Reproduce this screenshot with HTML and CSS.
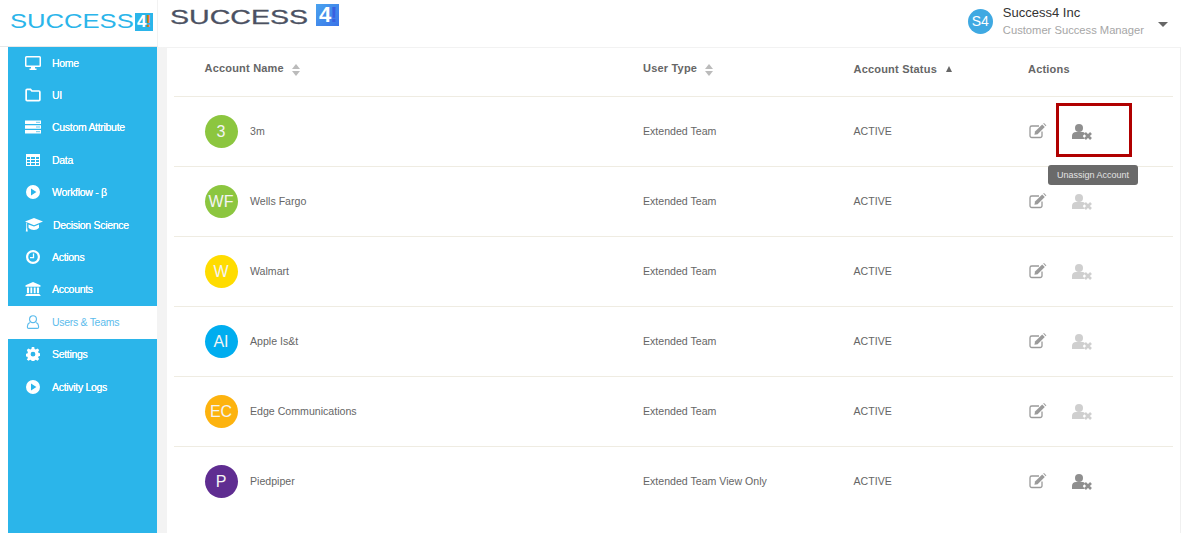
FILE: index.html
```html
<!DOCTYPE html>
<html>
    <head>
        <meta charset="UTF-8">
        <meta name="viewport" content="width=device-width, initial-scale=1">
        <title>Users &amp; Teams</title>
        <link rel="stylesheet" href="styles.css">
    </head>
    <body>
        <svg class="defs" width="0" height="0">
            <symbol id="i-edit" viewBox="0 0 18 16">
                <path d="M13 8.500v4.200a1.800 1.800 0 0 1-1.800 1.800H2.800A1.800 1.800 0 0 1 1 12.700V4.800A1.800 1.800 0 0 1 2.800 3H10" fill="none" stroke="currentColor" stroke-width="1.300"/>
                <path d="M6 8.600 13.200 1.400l2.600 2.600-7.200 7.200-3.200.6z" fill="currentColor"/>
                <path d="M14.200.6 15 0l2.400 2.400-.7.8z" fill="currentColor"/>
            </symbol>
            <symbol id="i-unassign" viewBox="0 0 20 16">
                <circle cx="7" cy="4" r="4" fill="currentColor"/>
                <path d="M0 15v-3.200C0 9.400 1.800 8 4 8h6c1.400 0 2.400.5 3 1.400L10.800 12l2 3z" fill="currentColor"/>
                <path d="M13 9l6 6M19 9l-6 6" stroke="currentColor" stroke-width="2.600" fill="none"/>
            </symbol>
            <symbol id="i-play" viewBox="0 0 14 14">
                <path fill-rule="evenodd" d="M7 0a7 7 0 1 1 0 14A7 7 0 0 1 7 0zM5 3.600v6.800L10.400 7z" fill="currentColor"/>
            </symbol>
        </svg>

        <header class="topbar">
            <div class="brand-cell">
                <div class="logo logo-small">
                    <span class="logo-word">SUCCESS</span>
                    <span class="logo-mark">4<b>!</b></span>
                </div>
            </div>
            <div class="logo logo-large">
                <span class="logo-word">SUCCESS</span>
                <span class="logo-mark">4<b>!</b></span>
            </div>
            <div class="profile">
                <span class="profile-badge">S4</span>
                <div class="profile-text">
                    <div class="profile-name">Success4 Inc</div>
                    <div class="profile-role">Customer Success Manager</div>
                </div>
                <span class="profile-caret"></span>
            </div>
        </header>

        <div class="layout">
            <nav class="sidebar">
                <a class="nav-item">
                    <svg class="nav-icon" viewBox="0 0 16 14"><path fill-rule="evenodd" d="M1.500 0h13A1.500 1.500 0 0 1 16 1.500v8a1.500 1.500 0 0 1-1.500 1.500H10v1.500h1.500V14h-7v-1.500H6V11H1.500A1.500 1.500 0 0 1 0 9.500v-8A1.500 1.500 0 0 1 1.500 0zM1.500 1.500v8h13v-8z" fill="currentColor"/></svg>
                    Home
                </a>
                <a class="nav-item">
                    <svg class="nav-icon" viewBox="0 0 14 12"><path d="M1.800 1h3l1.200 1.500h6.200a.8.800 0 0 1 .8.800v6.900a.8.800 0 0 1-.8.800H1.800a.8.800 0 0 1-.8-.8V1.800A.8.800 0 0 1 1.800 1z" fill="none" stroke="currentColor" stroke-width="1.500"/></svg>
                    UI
                </a>
                <a class="nav-item">
                    <svg class="nav-icon" viewBox="0 0 16 13"><path d="M0 0h16v3.600H0zM0 4.700h16v3.600H0zM0 9.400h16V13H0z" fill="currentColor"/><path d="M11 1.800h4M11 6.500h4M11 11.200h4" stroke="#2bb5ea" stroke-width=".7"/></svg>
                    Custom Attribute
                </a>
                <a class="nav-item">
                    <svg class="nav-icon nav-icon-sm" viewBox="0 0 14 12"><path fill-rule="evenodd" d="M0 0h14v12H0zM1 3v2h3V3zM5 3v2h4V3zM10 3v2h3V3zM1 6v2h3V6zM5 6v2h4V6zM10 6v2h3V6zM1 9v2h3V9zM5 9v2h4V9zM10 9v2h3V9z" fill="currentColor"/></svg>
                    Data
                </a>
                <a class="nav-item">
                    <svg class="nav-icon nav-icon-sm"><use href="#i-play"/></svg>
                    Workflow - β
                </a>
                <a class="nav-item">
                    <svg class="nav-icon nav-icon-wide" viewBox="0 0 18 14"><path d="M9 0l9 3.600-9 3.600L0 3.600z" fill="currentColor"/><path d="M3.500 6.500v3.300C5 11.300 7 12 9 12s3.500-.7 5-2.200V6.500L9 8.500zM1.300 4.500v5L.8 13.500h2l-.7-4v-4.700z" fill="currentColor"/></svg>
                    Decision Science
                </a>
                <a class="nav-item">
                    <svg class="nav-icon nav-icon-sm" viewBox="0 0 14 14"><circle cx="7" cy="7" r="5.900" fill="none" stroke="currentColor" stroke-width="2.200"/><path d="M7.500 3.500V7.700H4" fill="none" stroke="currentColor" stroke-width="1.300"/></svg>
                    Actions
                </a>
                <a class="nav-item">
                    <svg class="nav-icon" viewBox="0 0 16 15"><path d="M8 0l8 3.500V5H0V3.500zM1.500 6h2.300v6H1.500zM5.200 6h2v6h-2zM8.800 6h2v6h-2zM12.200 6h2.300v6h-2.300zM.8 12.800h14.400V14H.8zM0 14h16v1H0z" fill="currentColor"/></svg>
                    Accounts
                </a>
                <a class="nav-item nav-item-active">
                    <svg class="nav-icon" viewBox="0 0 14 15"><circle cx="7" cy="4.500" r="3.700" fill="none" stroke="currentColor" stroke-width="1.200"/><path d="M3.500 8C1.800 9 1 10.500 1 12.200V13a1.300 1.300 0 0 0 1.300 1.300h9.400A1.300 1.300 0 0 0 13 13v-.8C13 10.500 12.200 9 10.500 8" fill="none" stroke="currentColor" stroke-width="1.200"/></svg>
                    Users &amp; Teams
                </a>
                <a class="nav-item">
                    <svg class="nav-icon nav-icon-sm" viewBox="0 0 14 14"><path fill-rule="evenodd" d="M5.800 0h2.400l.4 2 1.200.5 1.700-1.100 1.700 1.700-1.100 1.700.5 1.200 2 .4v2.400l-2 .4-.5 1.200 1.100 1.700-1.700 1.700-1.700-1.100-1.200.5-.4 2H5.800l-.4-2-1.200-.5-1.700 1.100L.8 12.600l1.100-1.700-.5-1.200-2-.4V6.900l2-.4.5-1.200L.8 3.100l1.700-1.700 1.700 1.100 1.200-.5zM7 4.800a2.400 2.400 0 1 0 0 4.800 2.400 2.400 0 0 0 0-4.800z" fill="currentColor"/></svg>
                    Settings
                </a>
                <a class="nav-item">
                    <svg class="nav-icon nav-icon-sm"><use href="#i-play"/></svg>
                    Activity Logs
                </a>
            </nav>

            <main class="content">
                <div class="accounts">
                    <div class="row row-head">
                        <div>Account Name <span class="sort"></span></div>
                        <div>User Type <span class="sort"></span></div>
                        <div>Account Status <span class="sort-up"></span></div>
                        <div class="head-actions">Actions</div>
                    </div>

                    <div class="row">
                        <div class="account"><span class="avatar green">3</span>3m</div>
                        <div>Extended Team</div>
                        <div>ACTIVE</div>
                        <div class="actions">
                            <svg class="icon-edit"><use href="#i-edit"/></svg>
                            <span class="unassign-wrap">
                                <svg class="icon-unassign"><use href="#i-unassign"/></svg>
                                <span class="highlight"></span>
                                <span class="tooltip">Unassign Account</span>
                            </span>
                        </div>
                    </div>
                    <div class="row">
                        <div class="account"><span class="avatar green">WF</span>Wells Fargo</div>
                        <div>Extended Team</div>
                        <div>ACTIVE</div>
                        <div class="actions">
                            <svg class="icon-edit"><use href="#i-edit"/></svg>
                            <svg class="icon-unassign off"><use href="#i-unassign"/></svg>
                        </div>
                    </div>
                    <div class="row">
                        <div class="account"><span class="avatar yellow">W</span>Walmart</div>
                        <div>Extended Team</div>
                        <div>ACTIVE</div>
                        <div class="actions">
                            <svg class="icon-edit"><use href="#i-edit"/></svg>
                            <svg class="icon-unassign off"><use href="#i-unassign"/></svg>
                        </div>
                    </div>
                    <div class="row">
                        <div class="account"><span class="avatar blue">AI</span>Apple Is&amp;t</div>
                        <div>Extended Team</div>
                        <div>ACTIVE</div>
                        <div class="actions">
                            <svg class="icon-edit"><use href="#i-edit"/></svg>
                            <svg class="icon-unassign off"><use href="#i-unassign"/></svg>
                        </div>
                    </div>
                    <div class="row">
                        <div class="account"><span class="avatar amber">EC</span>Edge Communications</div>
                        <div>Extended Team</div>
                        <div>ACTIVE</div>
                        <div class="actions">
                            <svg class="icon-edit"><use href="#i-edit"/></svg>
                            <svg class="icon-unassign off"><use href="#i-unassign"/></svg>
                        </div>
                    </div>
                    <div class="row row-last">
                        <div class="account"><span class="avatar purple">P</span>Piedpiper</div>
                        <div>Extended Team View Only</div>
                        <div>ACTIVE</div>
                        <div class="actions">
                            <svg class="icon-edit"><use href="#i-edit"/></svg>
                            <svg class="icon-unassign"><use href="#i-unassign"/></svg>
                        </div>
                    </div>
                </div>
            </main>
        </div>
    </body>
</html>
```

FILE: styles.css
```css
* {
    box-sizing: border-box;
}

html, body {
    height: 533px;
    overflow: hidden;
}

body {
    margin: 0;
    background: #fff;
    font-family: "Liberation Sans", Arial, sans-serif;
    color: #666;
}

.defs {
    position: absolute;
}

/* Top bar */
.topbar {
    display: flex;
    height: 47px;
    align-items: flex-start;
}

.brand-cell {
    width: 158px;
    height: 47px;
    flex: none;
    padding: 11px 0 0 10px;
    border-right: 1px solid #f2f2f2;
    border-bottom: 1px solid #e8e8e8;
}

.logo {
    display: flex;
    align-items: flex-start;
}

.logo-word {
    display: block;
    font-weight: 400;
    transform-origin: left top;
    white-space: nowrap;
}

.logo-small .logo-word {
    color: #2bb5ea;
    font-size: 20px;
    line-height: 20px;
    width: 125px;
    transform: scaleX(1.28);
}

.logo-large {
    margin: 5px 0 0 12px;
}

.logo-large .logo-word {
    color: #4b5162;
    font-size: 21px;
    line-height: 24px;
    width: 146px;
    transform: scaleX(1.36);
    -webkit-text-stroke: .3px #4b5162;
}

.logo-mark {
    display: block;
    position: relative;
    text-align: left;
    color: #fff;
    font-weight: 700;
}

.logo-mark b {
    color: #ee7a1a;
    font-weight: 700;
}

.logo-small .logo-mark {
    width: 18px;
    height: 18px;
    margin-top: 2px;
    background: #2bb5ea;
    font-size: 17px;
    line-height: 18px;
    padding-left: 2px;
    letter-spacing: -1px;
}

.logo-large .logo-mark {
    width: 23px;
    height: 22px;
    margin-top: -1px;
    background: linear-gradient(135deg, #4aa3ef, #3a74e8);
    font-size: 22px;
    line-height: 22px;
    padding-left: 3px;
    letter-spacing: -1px;
}

.logo-large .logo-mark b {
    color: #3a5fe0;
}

.profile {
    margin-left: auto;
    display: flex;
    align-items: center;
    height: 42px;
    padding-right: 16px;
}

.profile-badge {
    width: 25px;
    height: 25px;
    border-radius: 50%;
    background: #3fa9e2;
    color: #fff;
    font-size: 14px;
    line-height: 25px;
    text-align: center;
    margin-right: 10px;
}

.profile-text {
    margin-top: 1px;
}

.profile-name {
    font-size: 13px;
    line-height: 16px;
    color: #333;
}

.profile-role {
    font-size: 11.200px;
    line-height: 18px;
    color: #a6a6a6;
}

.profile-caret {
    width: 0;
    height: 0;
    margin-left: 14px;
    margin-top: 7px;
    border-left: 5px solid transparent;
    border-right: 5px solid transparent;
    border-top: 5px solid #666;
}

/* Body of the page */
.layout {
    display: flex;
    height: 486px;
    padding-left: 8px;
}

.sidebar {
    width: 149px;
    flex: none;
    background: #2bb5ea;
    color: #fff;
}

.nav-item {
    display: flex;
    align-items: center;
    height: 32.400px;
    padding-left: 17px;
    padding-bottom: 1px;
    font-size: 10.500px;
    letter-spacing: -.3px;
    text-shadow: 0 0 .5px #fff;
}

.nav-icon {
    width: 16px;
    height: 14px;
    margin-right: 11px;
    flex: none;
    color: #fff;
}

.nav-icon-sm {
    width: 14px;
    margin-left: 1px;
    margin-right: 12px;
}

.nav-icon-wide {
    width: 18px;
    margin-right: 10px;
}

.nav-item-active {
    background: #fff;
    color: #5cbcec;
    text-shadow: none;
}

.nav-item-active .nav-icon {
    color: #5cbcec;
}

.content {
    width: 1024px;
    padding: 0 7px;
    background: #fff;
    border-left: 10px solid #f3f3f3;
    border-right: 1px solid #f0f0f0;
    border-top: 1px solid #f2f2f2;
}

.accounts {
    width: 999px;
}

.row {
    position: relative;
    display: grid;
    grid-template-columns: 438.500px 210.500px 174.500px 1fr;
    align-items: center;
    height: 70px;
    padding-left: 30.500px;
    padding-bottom: 1px;
    border-top: 1px solid #efece2;
    font-size: 10.600px;
    color: #666;
}

.row-head {
    height: 48px;
    padding-bottom: 6px;
    border-top: none;
    font-size: 11px;
    font-weight: 700;
    letter-spacing: .2px;
}

.account {
    display: flex;
    align-items: center;
}

.avatar {
    width: 33px;
    height: 33px;
    margin-right: 12.500px;
    border-radius: 50%;
    color: #f4f4f4;
    font-size: 16px;
    line-height: 33px;
    text-align: center;
}

.green { background: #8cc63f; }
.yellow { background: #ffdc00; }
.blue { background: #00adef; }
.amber { background: #fdb30f; }
.purple { background: #5f2d91; }

.sort, .sort-up {
    display: inline-block;
    position: relative;
    vertical-align: middle;
    margin-left: 5px;
}

.sort {
    width: 8px;
    height: 12px;
}

.sort:before, .sort:after {
    content: "";
    position: absolute;
    left: 0;
    border-left: 4px solid transparent;
    border-right: 4px solid transparent;
}

.sort:before {
    top: 0;
    border-bottom: 5px solid #bbb;
}

.sort:after {
    bottom: 0;
    border-top: 5px solid #bbb;
}

.sort-up {
    width: 0;
    height: 0;
    margin-left: 6px;
    margin-top: -3px;
    border-left: 3.500px solid transparent;
    border-right: 3.500px solid transparent;
    border-bottom: 6px solid #666;
}

.actions {
    display: flex;
    align-items: center;
}

.icon-edit {
    width: 18px;
    height: 16px;
    margin-left: 1px;
    margin-top: -1px;
    color: #9a9a9a;
}

.icon-unassign {
    width: 20px;
    height: 16px;
    margin-left: 25px;
    margin-top: 1px;
    color: #8f8f8f;
}

.icon-unassign.off {
    color: #cfcfcf;
}

.unassign-wrap {
    position: relative;
    display: flex;
}

/* Red box of the annotation and the hover tooltip lie over the row */
.highlight {
    position: absolute;
    left: 9px;
    top: -20px;
    width: 76px;
    height: 54px;
    border: 3px solid #b00000;
}

.tooltip {
    position: absolute;
    left: 1px;
    top: 42px;
    width: 90px;
    height: 20px;
    background: #6a6a6a;
    border-radius: 3px;
    color: #e4e4e4;
    font-size: 9px;
    line-height: 20px;
    text-align: center;
    white-space: nowrap;
    z-index: 2;
}
```
